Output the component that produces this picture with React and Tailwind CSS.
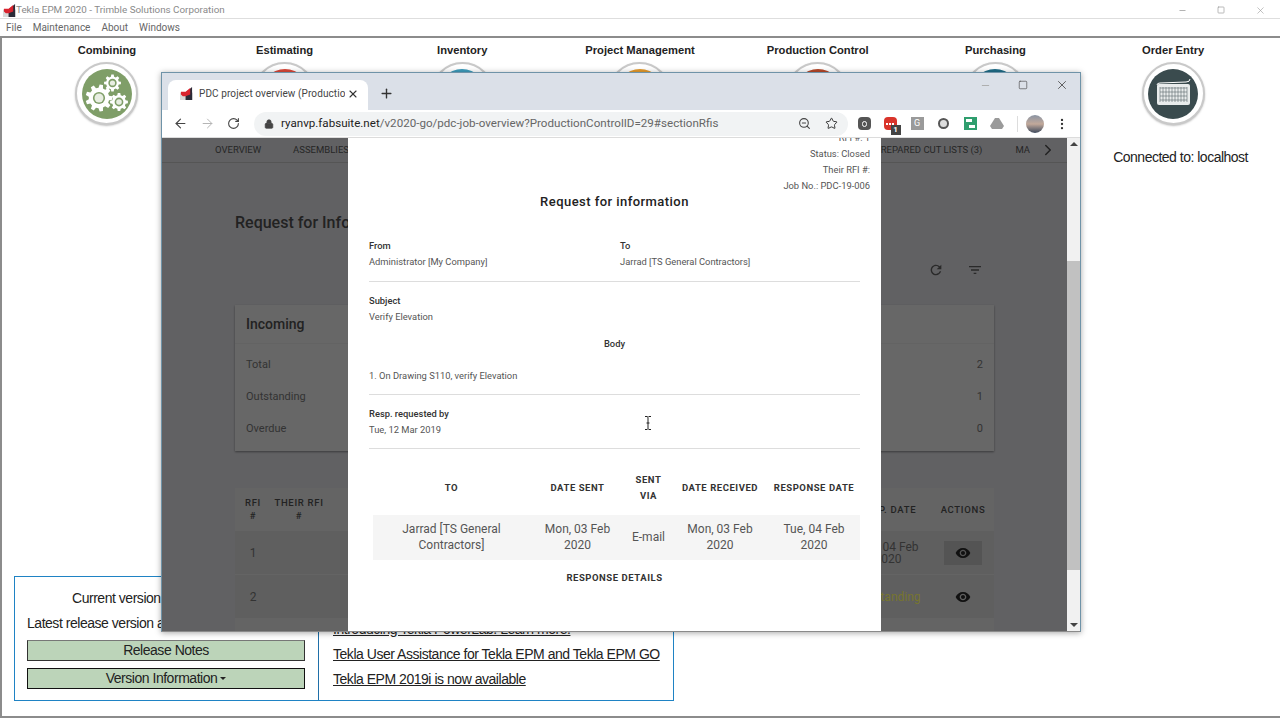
import React from 'react';
import { ArrowLeft, ArrowRight, RotateCw, Lock, ZoomOut, Star, MoreVertical, Plus, X, Minus, Square, ChevronRight } from 'lucide-react';
import { MdVisibility, MdRefresh, MdFilterList } from 'react-icons/md';

const gearPath = (cx, cy, r, teeth) => {
  const pts = [];
  const step = (Math.PI * 2) / teeth;
  for (let i = 0; i < teeth; i++) {
    const a = i * step;
    const add = (ang, rad) => pts.push(`${(cx + Math.cos(ang) * rad).toFixed(2)} ${(cy + Math.sin(ang) * rad).toFixed(2)}`);
    add(a - step * 0.32, r * 0.76);
    add(a - step * 0.18, r);
    add(a + step * 0.18, r);
    add(a + step * 0.32, r * 0.76);
  }
  return `M${pts.join('L')}Z`;
};

const TeklaLogo = ({ size = 13 }) => (
  <svg width={size} height={size} viewBox="0 0 14 14" className="shrink-0">
    <rect x="0" y="6" width="14" height="8" fill="#d9d9d9" />
    <path d="M6 6 13 0v14H6z" fill="#2b2b38" />
    <path d="M1 5h5l5-4v7l-5 2H3L1 8z" fill="#d9232e" />
  </svg>
);

const GearsIcon = () => (
  <svg viewBox="0 0 50 50" className="w-full h-full">
    {[[17, 29, 13.5, 9, 4.5], [30.5, 14, 8.5, 8, 2.6], [37, 33, 9, 8, 2.8]].map(([x, y, r, t, h]) => (
      <g key={x}>
        <path d={gearPath(x, y, r, t)} fill="#fff" />
        <circle cx={x} cy={y} r={h + 1.6} fill="#7f9e68" />
        <circle cx={x} cy={y} r={h} fill="#e8eee2" />
      </g>
    ))}
  </svg>
);

const KeyboardIcon = () => (
  <svg viewBox="0 0 50 50" className="w-full h-full">
    <path d="M9 16 Q9 14 12 14 L38 13 Q42 13 42 10" fill="none" stroke="#fff" strokeWidth="1" />
    <rect x="9" y="15" width="33" height="21" rx="2" fill="#e9ecec" />
    <g stroke="#5a696c" strokeWidth="0.6">
      {[19, 23, 27, 31].map((y) => <line key={y} x1="12" y1={y} x2="39" y2={y} />)}
      {[12, 15, 18, 21, 24, 27, 30, 33, 36, 39].map((x) => <line key={x} x1={x} y1="18" x2={x} y2="33" />)}
    </g>
  </svg>
);

const modules = [
  { name: 'Combining', color: 'bg-[#7f9e68]', icon: <GearsIcon /> },
  { name: 'Estimating', color: 'bg-[#d9483a]' },
  { name: 'Inventory', color: 'bg-[#3d9cbc]' },
  { name: 'Project Management', color: 'bg-[#e39a2d]' },
  { name: 'Production Control', color: 'bg-[#b5482a]' },
  { name: 'Purchasing', color: 'bg-[#1f6d88]' },
  { name: 'Order Entry', color: 'bg-[#3a4b4e]', icon: <KeyboardIcon /> },
];

const Extension = ({ children }) => <div className="w-[14px] h-[14px] flex items-center justify-center relative">{children}</div>;

const Field = ({ label, value, className = '' }) => (
  <div className={className}>
    <div className="h-4 leading-4 font-medium text-[#333]">{label}</div>
    <div className="h-4 leading-4 text-[#555]">{value}</div>
  </div>
);

const BrowserWindow = () => (
  <div className="absolute left-[161px] top-[72px] w-[920px] h-[560px] flex flex-col bg-white border border-[#6f93a8] border-b-[#8a8a8a] shadow-[0_1px_6px_rgba(0,0,0,0.35)] font-['Roboto',sans-serif] z-10">
    {/* Tab strip */}
    <div className="h-[37px] bg-[#dbe0e8] flex items-end pl-[6px] shrink-0 relative">
      <div className="w-[200px] h-[30px] bg-white rounded-t-lg flex items-center pl-[12px] pr-[8px] pb-[3px]">
        <TeklaLogo />
        <span className="ml-[6px] text-[10px] tracking-[0.1px] text-[#444] whitespace-nowrap overflow-hidden w-[146px]">PDC project overview (Production Control)</span>
        <X size={12} strokeWidth={2.2} className="ml-[2px] text-[#333] shrink-0" />
      </div>
      <Plus size={15} strokeWidth={2.2} className="ml-[11px] mb-[9px] text-[#333]" />
      <div className="absolute right-[11px] top-[5px] flex items-center gap-[27px] text-[#444]">
        <Minus size={11} className="text-[#aaa]" />
        <Square size={10} strokeWidth={1.5} />
        <X size={14} strokeWidth={1.4} />
      </div>
    </div>

    {/* Toolbar */}
    <div className="h-[28px] bg-white border-b border-[#dcdcdc] flex items-center shrink-0 pl-[11px]">
      <ArrowLeft size={15} strokeWidth={1.8} className="text-[#444]" />
      <ArrowRight size={15} strokeWidth={1.6} className="ml-[12px] text-[#b5b5b5]" />
      <RotateCw size={13} strokeWidth={2} className="ml-[12px] text-[#444]" />
      <div className="ml-[14px] w-[594px] h-[24px] rounded-full bg-[#f1f3f4] flex items-center pl-[10px] pr-[10px]">
        <Lock size={10} fill="#444" className="text-[#444]" />
        <span className="ml-[7px] text-[11.6px] text-[#666] whitespace-nowrap"><span className="text-[#222]">ryanvp.fabsuite.net</span>/v2020-go/pdc-job-overview?ProductionControlID=29#sectionRfis</span>
        <ZoomOut size={13} className="ml-auto text-[#444]" />
        <Star size={13} strokeWidth={1.8} className="ml-[14px] text-[#333]" />
      </div>
      <div className="ml-[9px] flex items-center gap-[12.6px]">
        <Extension><div className="w-[13px] h-[13px] bg-[#555] rounded-sm flex items-center justify-center"><div className="w-[5px] h-[6px] rounded-full border border-white" /></div></Extension>
        <Extension>
          <div className="w-[13px] h-[13px] bg-[#d9342b] rounded-sm flex items-center gap-px pl-[2px]">
            <div className="w-[2px] h-[2px] bg-white" /><div className="w-[2px] h-[2px] bg-white" /><div className="w-[2px] h-[2px] bg-white" />
          </div>
          <span className="absolute right-[-3px] bottom-[-4px] w-[10px] h-[10px] bg-[#444] text-white text-[8px] leading-[10px] text-center font-bold">1</span>
        </Extension>
        <Extension><div className="w-[13px] h-[13px] bg-[#9a9a9a] text-white text-[9px] leading-[13px] text-center">G</div></Extension>
        <Extension><div className="w-[11px] h-[11px] rounded-full border-[2px] border-[#555] bg-[#ddd]" /></Extension>
        <Extension><div className="w-[13px] h-[13px] bg-[#2f9e6e] border-[2px] border-[#2f9e6e] flex flex-col justify-between"><div className="h-[3px] w-[6px] bg-white" /><div className="h-[3px] w-[6px] self-end bg-white" /></div></Extension>
        <Extension>
          <svg width="14" height="13" viewBox="0 0 14 13"><path d="M5 1h4l5 8-2 3H2l-2-3z" fill="#9a9a9a" /></svg>
        </Extension>
      </div>
      <div className="ml-[13px] w-px h-[16px] bg-[#ddd]" />
      <div className="ml-[8px] w-[18px] h-[18px] rounded-full bg-gradient-to-b from-[#8a94a3] via-[#c2a99a] to-[#3f4a5c]" />
      <MoreVertical size={14} className="ml-[11px] text-[#333]" />
    </div>

    {/* Page */}
    <div className="flex-1 flex min-h-0">
      <div className="flex-1 relative overflow-hidden bg-[#616163] text-[#2a2a2a] text-[11px]">
        <div className="h-[25px] border-b border-[#555] flex items-center relative text-[9.5px] text-[#262626] whitespace-nowrap">
          <span className="ml-[53px]">OVERVIEW</span>
          <span className="ml-[32px]">ASSEMBLIES</span>
          <span className="ml-auto">PREPARED CUT LISTS (3)</span>
          <span className="ml-[33px]">MA</span>
          <ChevronRight size={18} strokeWidth={2} className="ml-[9px] mr-[10px] text-[#222]" />
        </div>

        <div className="px-[73px]">
          <div className="mt-[50px] text-[16px] leading-[20px] font-medium text-[#222]">Request for Information</div>
          <div className="mt-[25px] h-[24px] flex items-center justify-end gap-[23px] pr-[11px] text-[#2a2a2a]">
            <MdRefresh size={16} />
            <MdFilterList size={16} />
          </div>

          <div className="mt-[23px] h-[146px] bg-[#676767] shadow-[0_1px_2px_rgba(0,0,0,0.4)] flex flex-col">
            <div className="h-[39px] px-[11px] flex items-center border-b border-[#636363] text-[14px] font-medium text-[#222]">Incoming</div>
            <div className="flex-1 px-[11px] pt-[5px] flex flex-col text-[#333]">
              {[['Total', '2'], ['Outstanding', '1'], ['Overdue', '0']].map(([k, v]) => (
                <div key={k} className="h-[32px] flex items-center justify-between"><span>{k}</span><span>{v}</span></div>
              ))}
            </div>
          </div>

          <div className="mt-[37px] bg-[#646464] h-[144px]">
            <div className="h-[42px] grid grid-cols-[36px_56px_1fr_80px_66px] items-center text-center text-[9.5px] font-medium tracking-[0.7px] leading-[13px] text-[#222]">
              <div>RFI<br />#</div>
              <div>THEIR RFI<br />#</div>
              <div />
              <div className="whitespace-nowrap">RESP. DATE</div>
              <div className="pl-[4px]">ACTIONS</div>
            </div>
            <div className="h-[43px] bg-[#5f5f5f] mt-px grid grid-cols-[36px_56px_1fr_80px_66px] items-center text-center text-[12px] leading-[12px] text-[#333]">
              <div>1</div><div /><div />
              <div>Tue, 04 Feb<br />2020</div>
              <div className="pl-[4px] flex justify-center">
                <div className="w-[38px] h-[24px] bg-[#545454] flex items-center justify-center"><MdVisibility size={16} className="text-[#111]" /></div>
              </div>
            </div>
            <div className="h-[43px] bg-[#5f5f5f] mt-px grid grid-cols-[36px_56px_1fr_80px_66px] items-center text-center text-[12px] text-[#333]">
              <div>2</div><div /><div />
              <div className="text-[#77752f]">Outstanding</div>
              <div className="pl-[4px] flex justify-center"><MdVisibility size={16} className="text-[#111]" /></div>
            </div>
          </div>
        </div>

        {/* Modal */}
        <div className="absolute left-[186px] top-0 bottom-0 w-[533px] bg-white overflow-hidden text-[9.35px] text-[#555]">
          <div className="-mt-[8px] pr-[11px] text-right leading-4">
            <div>RFI #: 1</div>
            <div>Status: Closed</div>
            <div>Their RFI #:</div>
            <div>Job No.: PDC-19-006</div>
          </div>
          <div className="h-4 leading-4 text-center text-[13px] font-medium tracking-[0.45px] text-[#222]">Request for information</div>
          <div className="mx-[21px]">
            <div className="mt-[28px] pb-[11px] border-b border-[#ddd] flex">
              <Field label="From" value="Administrator [My Company]" className="w-[251px]" />
              <Field label="To" value="Jarrad [TS General Contractors]" />
            </div>
            <Field label="Subject" value="Verify Elevation" className="mt-[11px]" />
            <div className="mt-[11px] h-4 leading-4 text-center font-medium text-[#333]">Body</div>
            <div className="mt-[16px] h-4 leading-4">1. On Drawing S110, verify Elevation</div>
            <div className="mt-[10px] border-t border-[#ddd]" />
            <Field label="Resp. requested by" value="Tue, 12 Mar 2019" className="mt-[11px] pb-[10px] border-b border-[#ddd]" />
            <div className="mt-[22px] ml-[4px] grid grid-cols-[157px_95px_47px_96px_92px] items-center text-center h-[33px] text-[9.5px] font-bold tracking-[0.55px] leading-4 text-[#333]">
              <div>TO</div>
              <div>DATE SENT</div>
              <div>SENT<br />VIA</div>
              <div className="whitespace-nowrap">DATE RECEIVED</div>
              <div className="whitespace-nowrap">RESPONSE DATE</div>
            </div>
            <div className="mt-[11px] ml-[4px] h-[45px] pb-[2px] bg-[#f5f5f5] grid grid-cols-[157px_95px_47px_96px_92px] items-center text-center text-[12px] leading-4 text-[#555]">
              <div>Jarrad [TS General<br />Contractors]</div>
              <div>Mon, 03 Feb<br />2020</div>
              <div>E-mail</div>
              <div>Mon, 03 Feb<br />2020</div>
              <div>Tue, 04 Feb<br />2020</div>
            </div>
            <div className="mt-[10px] h-4 leading-4 text-center text-[9.5px] font-bold tracking-[0.55px] text-[#333]">RESPONSE DETAILS</div>
          </div>
          {/* text cursor */}
          <svg className="absolute left-[296px] top-[278px]" width="8" height="14" viewBox="0 0 8 14">
            <path d="M1 .5h2.2L4 1.3 4.8.5H7M4 1.3v11.4M1 13.5h2.2l.8-.8.8.8H7M2.5 7h3" fill="none" stroke="#222" strokeWidth="1" />
          </svg>
        </div>
      </div>

      {/* Scrollbar */}
      <div className="w-[13px] bg-[#f1f1f1] flex flex-col items-center">
        <div className="h-[123px] w-full flex justify-center pt-[4px]">
          <div className="w-0 h-0 border-x-[4px] border-x-transparent border-b-[4px] border-b-[#444]" />
        </div>
        <div className="h-[309px] w-full bg-[#c1c1c1]" />
        <div className="flex-1 w-full flex justify-center items-end pb-[4px]">
          <div className="w-0 h-0 border-x-[4px] border-x-transparent border-t-[4px] border-t-[#444]" />
        </div>
      </div>
    </div>
  </div>
);

export default function App() {
  return (
    <div className="relative w-[1280px] h-[720px] overflow-hidden bg-white flex flex-col font-['Liberation_Sans',sans-serif]">
      {/* Title bar */}
      <div className="h-[19px] shrink-0 flex items-center pl-[3px] pt-[2px] border-b border-[#dedede] font-['Roboto',sans-serif] text-[9.85px] text-[#8a8a8a]">
        <TeklaLogo />
        <span className="whitespace-nowrap">Tekla EPM 2020 - Trimble Solutions Corporation</span>
        <div className="ml-auto flex items-center gap-[30px] pr-[14px] text-[#999]">
          <Minus size={9} />
          <Square size={8} />
          <X size={11} strokeWidth={1.3} />
        </div>
      </div>

      {/* Menu */}
      <div className="h-[17px] shrink-0 flex items-center gap-[11px] pl-[6px] font-['Roboto',sans-serif] text-[10px] text-[#666]">
        <span>File</span>
        <span>Maintenance</span>
        <span>About</span>
        <span>Windows</span>
      </div>

      {/* Main */}
      <div className="flex-1 mb-[2px] flex flex-col border-t-2 border-b-2 border-l-2 border-[#8c8c8c] min-h-0">
        <div className="w-[1244px] ml-[16px] grid grid-cols-7 mt-[4px] text-[#222]">
          {modules.map((m) => (
            <div key={m.name} className="flex flex-col items-center">
              <div className="h-[16px] leading-[16px] text-[11.2px] font-bold whitespace-nowrap">{m.name}</div>
              <div className="mt-[4px] w-[63px] h-[63px] rounded-full bg-white border-2 border-[#c9c9c9] shadow-[0_1px_2px_rgba(0,0,0,0.25)] flex items-center justify-center">
                <div className={`w-[50px] h-[50px] rounded-full ${m.color}`}>{m.icon}</div>
              </div>
            </div>
          ))}
        </div>
        <div className="self-end mr-[32px] mt-[23px] text-[14px] leading-[18px] text-[#222] tracking-[-0.5px]">Connected to: localhost</div>

        {/* Version and news panels */}
        <div className="mt-auto mb-[15px] ml-[12px] w-[660px] h-[125px] flex border border-[#1f83c4] text-[14px] text-[#222] tracking-[-0.47px]">
          <div className="w-[304px] border-r border-[#1f6fa8] pl-[12px] pr-[13px] flex flex-col">
            <div className="mt-[12px] h-[18px] leading-[18px] pl-[45px] whitespace-nowrap">Current version is</div>
            <div className="mt-[7px] h-[18px] leading-[18px] whitespace-nowrap">Latest release version available</div>
            <div className="mt-[8px] h-[21px] bg-[#bcd4b9] border border-[#333] border-t-[#777] leading-[18px] text-center">Release Notes</div>
            <div className="mt-[7px] h-[21px] pb-[1px] bg-[#bcd4b9] border border-[#111] leading-[17px] flex items-center justify-center">
              Version Information
              <span className="ml-[3px] w-0 h-0 border-x-[3px] border-x-transparent border-t-[3px] border-t-[#222]" />
            </div>
          </div>
          <div className="flex-1 pl-[14px] flex flex-col underline whitespace-nowrap">
            <div className="mt-[43px] h-[18px] leading-[18px]">Introducing Tekla PowerLab. Learn more!</div>
            <div className="mt-[7px] h-[18px] leading-[18px]">Tekla User Assistance for Tekla EPM and Tekla EPM GO</div>
            <div className="mt-[7px] h-[18px] leading-[18px]">Tekla EPM 2019i is now available</div>
          </div>
        </div>
      </div>

      <BrowserWindow />
    </div>
  );
}
